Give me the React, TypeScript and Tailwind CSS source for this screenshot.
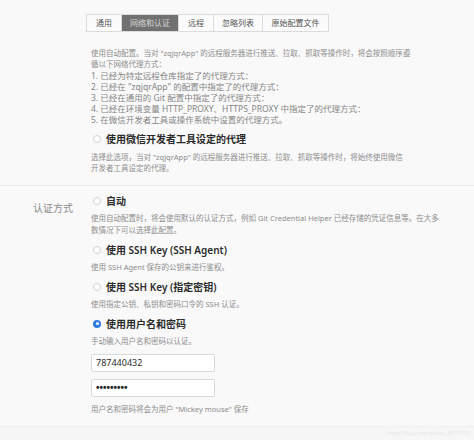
const tabs = [
  { label: "通用", w: "w-[34px]" },
  { label: "网络和认证", w: "w-[57px]", active: true },
  { label: "远程", w: "w-[35px]" },
  { label: "忽略列表", w: "w-[49px]" },
  { label: "原始配置文件", w: "w-[66px]" },
];

function Radio({ checked = false }: { checked?: boolean }) {
  return checked ? (
    <span className="flex h-[8px] w-[8px] shrink-0 items-center justify-center rounded-full bg-[#2f7be0]">
      <span className="h-[3px] w-[3px] rounded-full bg-white" />
    </span>
  ) : (
    <span className="h-[8px] w-[8px] shrink-0 rounded-full border border-[#d2d2d2] bg-white" />
  );
}

function Title({ text, checked }: { text: string; checked?: boolean }) {
  return (
    <div className="flex h-[14px] items-center gap-[5px] pl-[2px]">
      <Radio checked={checked} />
      <span className="text-[10px] font-semibold leading-[14px] text-[#2b2b2b]">
        {text}
      </span>
    </div>
  );
}

function Option({ title, desc }: { title: string; desc: string[] }) {
  return (
    <div className="mb-[6.5px]">
      <Title text={title} />
      <div className="mt-[5px] text-[7.5px] leading-[11.5px] text-[#8d8d8d]">
        {desc.map((d, i) => (
          <p key={i}>{d}</p>
        ))}
      </div>
    </div>
  );
}

export default function App() {
  return (
    <div
      className="flex h-[440px] w-[474px] flex-col overflow-hidden bg-[#f9f9f9]"
      style={{ fontFamily: '"Noto Sans", "Noto Sans CJK SC", sans-serif' }}
    >
      {/* Proxy section */}
      <div className="pl-[86px] pt-[14px]">
        <div className="flex h-[18px] w-fit border border-[#dcdcdc] bg-[#fbfbfb]">
          {tabs.map((t, i) => (
            <div
              key={t.label}
              className={`flex items-center justify-center text-[8px] ${t.w} ${
                i > 0 ? "border-l border-[#dcdcdc]" : ""
              } ${t.active ? "bg-[#717171] text-[#d6d6d6]" : "text-[#555]"}`}
            >
              {t.label}
            </div>
          ))}
        </div>

        <div className="pl-[5px] pt-[16px]">
          <div className="text-[7.5px] leading-[11px] text-[#8d8d8d]">
            <p>
              使用自动配置。当对 "zqjqrApp" 的远程服务器进行推送、拉取、抓取等操作时，将会按照顺序遵
            </p>
            <p>循以下网络代理方式：</p>
          </div>
          <div className="text-[8.5px] leading-[11px] text-[#858585]">
            <p>1. 已经为特定远程仓库指定了的代理方式：</p>
            <p>2. 已经在 "zqjqrApp" 的配置中指定了的代理方式：</p>
            <p>3. 已经在通用的 Git 配置中指定了的代理方式：</p>
            <p>4. 已经在环境变量 HTTP_PROXY、HTTPS_PROXY 中指定了的代理方式：</p>
            <p>5. 在微信开发者工具或操作系统中设置的代理方式。</p>
          </div>

          <div className="mt-[7px]">
            <Title text="使用微信开发者工具设定的代理" />
            <div className="mt-[6px] text-[7.5px] leading-[11px] text-[#8d8d8d]">
              <p>
                选择此选项，当对 "zqjqrApp" 的远程服务器进行推送、拉取、抓取等操作时，将始终使用微信
              </p>
              <p>开发者工具设定的代理。</p>
            </div>
          </div>
        </div>
      </div>

      <div className="mt-[11px] h-px bg-[#ebebeb]" />

      {/* Auth section */}
      <div className="flex pt-[8px]">
        <div className="w-[91px] shrink-0 pr-[18px] text-right">
          <span className="text-[10px] leading-[14px] text-[#8a8a8a]">
            认证方式
          </span>
        </div>
        <div className="flex-1">
          <Option
            title="自动"
            desc={[
              "使用自动配置时，将会使用默认的认证方式，例如 Git Credential Helper 已经存储的凭证信息等。在大多",
              "数情况下可以选择此配置。",
            ]}
          />
          <Option
            title="使用 SSH Key (SSH Agent)"
            desc={["使用 SSH Agent 保存的公钥来进行鉴权。"]}
          />
          <Option
            title="使用 SSH Key (指定密钥)"
            desc={["使用指定公钥、私钥和密码口令的 SSH 认证。"]}
          />
          <div>
            <Title text="使用用户名和密码" checked />
            <p className="mt-[5px] text-[7.5px] leading-[11.5px] text-[#8d8d8d]">
              手动输入用户名和密码以认证。
            </p>
            <div className="mt-[6.5px] flex flex-col gap-[6.5px]">
              <div className="flex h-[18.5px] w-[124px] items-center rounded-[2px] border border-[#d9d9d9] bg-white px-[4px] text-[9px] text-[#2b2b2b]">
                787440432
              </div>
              <div
                className="flex h-[18.5px] w-[124px] items-center rounded-[2px] border border-[#d9d9d9] bg-white px-[4px] text-[10px] font-bold text-[#2b2b2b]"
                style={{ fontFamily: '"Liberation Sans", sans-serif' }}
              >
                •••••••••
              </div>
            </div>
            <p className="mt-[6.5px] text-[7.5px] leading-[11.5px] text-[#8d8d8d]">
              用户名和密码将会为用户 "Mickey mouse" 保存
            </p>
          </div>
        </div>
      </div>

      <div className="mt-[11px] h-px bg-[#efefef]" />
      <div className="flex flex-1 items-center justify-end bg-[#f6f6f6] pr-[4px]">
        <span className="text-[5px] text-[#e6e6e6]">
          https://blog.csdn.net/qq_35713752
        </span>
      </div>
    </div>
  );
}
